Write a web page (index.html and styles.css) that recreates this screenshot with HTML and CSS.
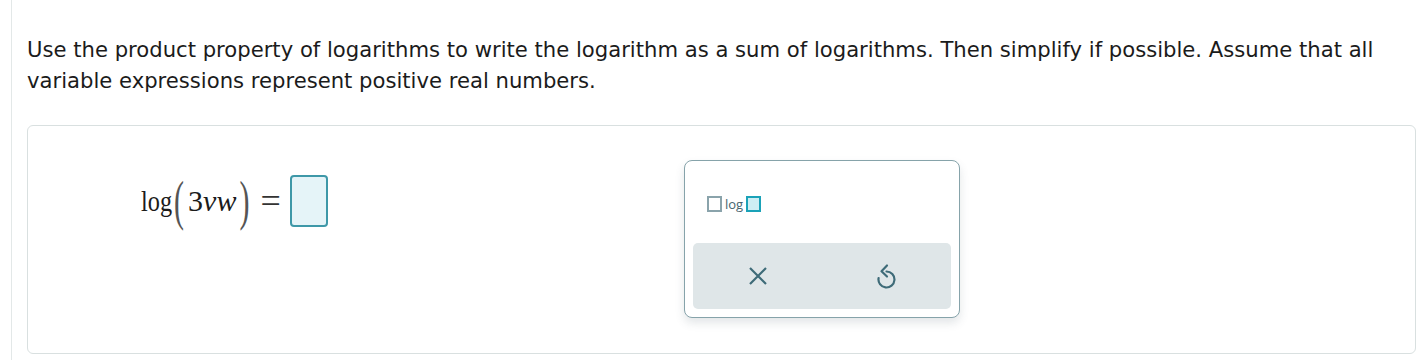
FILE: index.html
```html
<!DOCTYPE html>
<html>
<head>
<meta charset="utf-8">
<link rel="stylesheet" href="styles.css">
</head>
<body>
<div class="page">
  <p class="prompt">Use the product property of logarithms to write the logarithm as a sum of logarithms. Then simplify if possible. Assume that all variable expressions represent positive real numbers.</p>
  <div class="answer">
    <div class="math">
      <span class="fn">log</span><span class="paren">(</span><span class="num">3</span><span class="var v">v</span><span class="var w">w</span><span class="paren close">)</span><span class="eq">=</span><span class="slot"></span>
    </div>
    <div class="palette">
      <div class="templates">
        <span class="tpl">
          <span class="tbox"></span><span class="tlog">log</span><span class="tbox active"></span>
        </span>
      </div>
      <div class="actions">
        <button class="act" aria-label="clear">
          <svg width="20" height="20" viewBox="0 0 20 20"><path d="M2 2 L18 18 M18 2 L2 18" stroke="#3e6b78" stroke-width="2.2" fill="none"/></svg>
        </button>
        <button class="act" aria-label="undo">
          <svg width="22" height="26" viewBox="0 0 22 26"><path d="M10.5 8.5 A8 8 0 1 1 2.6 15" stroke="#3e6b78" stroke-width="2.2" fill="none" stroke-linecap="round"/><path d="M11 2.5 L5.5 8.2 L11 13.5" stroke="#3e6b78" stroke-width="2.2" fill="none" stroke-linecap="round" stroke-linejoin="round"/></svg>
        </button>
      </div>
    </div>
  </div>
</div>
</body>
</html>
```
FILE: styles.css
```css
html, body {
  margin: 0;
  padding: 0;
  background: #ffffff;
}
.page {
  margin-left: 11px;
  border-left: 1px solid #e3e8e8;
  padding: 34px 5px 6px 15px;
  min-height: 360px;
  box-sizing: border-box;
}
.prompt {
  margin: 0 0 29px 0;
  font-family: "DejaVu Sans", Verdana, sans-serif;
  font-size: 21.15px;
  line-height: 31px;
  color: #1b1b1b;
}
.answer {
  border: 1px solid #d9e0e0;
  border-radius: 6px;
  height: 229px;
  box-sizing: border-box;
  display: flex;
  align-items: flex-start;
  padding: 34px 0 0 113px;
}
.math {
  display: flex;
  align-items: center;
  width: 543px;
  height: 52px;
  margin-top: 15px;
  font-family: "Liberation Serif", "Times New Roman", serif;
  color: #1b1b1b;
  font-size: 30px;
  line-height: 1;
}
.fn {
  display: inline-block;
  transform: scaleX(0.81);
  transform-origin: left center;
  margin-right: -7.3px;
}
.paren {
  display: inline-block;
  color: #555;
  transform: scale(1, 1.8);
  margin-left: 2px;
}
.paren.close {
  margin-left: 3px;
}
.num {
  margin-left: 4px;
}
.var {
  font-style: italic;
}
.eq {
  font-size: 36px;
  margin: 0 9px 0 11px;
  color: #333;
}
.slot {
  display: inline-block;
  width: 34px;
  height: 48px;
  border: 2px solid #3e98a8;
  border-radius: 4px;
  background: #e5f4f8;
}
.palette {
  width: 276px;
  height: 158px;
  box-sizing: border-box;
  border: 1px solid #86a3aa;
  border-radius: 8px;
  background: #fff;
  box-shadow: 0 5px 10px rgba(60, 80, 90, 0.14);
  padding: 8px;
  display: flex;
  flex-direction: column;
}
.templates {
  flex: 1;
  display: flex;
  align-items: center;
  padding-left: 14px;
  padding-bottom: 4px;
}
.tpl {
  display: flex;
  align-items: center;
  gap: 3px;
}
.tbox {
  display: inline-block;
  width: 11px;
  height: 12px;
  border: 2px solid #8aa3ab;
  background: #fff;
}
.tbox.active {
  border-color: #1aa2b8;
  background: #cdeef4;
}
.tlog {
  font-family: "Open Sans", "DejaVu Sans", sans-serif;
  font-size: 13px;
  color: #46646e;
  margin: 0;
}
.actions {
  height: 66px;
  background: #dfe6e8;
  border-radius: 5px;
  display: flex;
}
.act {
  flex: 1;
  border: 0;
  background: transparent;
  display: flex;
  align-items: center;
  justify-content: center;
  padding: 0;
  cursor: pointer;
}
```
